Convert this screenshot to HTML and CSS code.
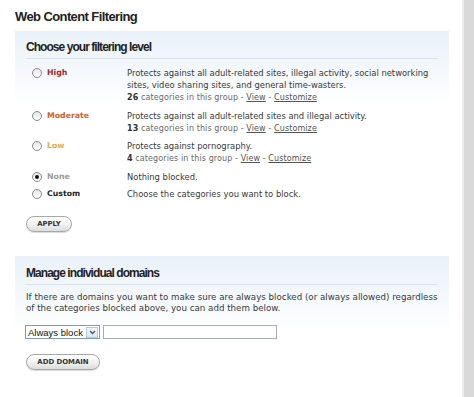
FILE: index.html
```html
<!DOCTYPE html>
<html lang="en">

<head>
  <meta charset="UTF-8">
  <title>Web Content Filtering</title>
  <link rel="stylesheet" href="styles.css">
</head>

<body>
  <div class="page">
    <div class="main">
      <h1 class="page-title">Web Content Filtering</h1>

      <div class="panel">
        <h2 class="panel-title">Choose your filtering level</h2>

        <div class="levels">
          <div class="level">
            <input type="radio" name="level" class="radio">
            <span class="level-name high">High</span>
            <div class="level-desc">
              <p>Protects against all adult-related sites, illegal activity, social networking sites, video sharing sites, and general time-wasters.</p>
              <p class="cats"><b>26</b> categories in this group - <a href="#">View</a> - <a href="#">Customize</a></p>
            </div>
          </div>
          <div class="level">
            <input type="radio" name="level" class="radio">
            <span class="level-name moderate">Moderate</span>
            <div class="level-desc">
              <p>Protects against all adult-related sites and illegal activity.</p>
              <p class="cats"><b>13</b> categories in this group - <a href="#">View</a> - <a href="#">Customize</a></p>
            </div>
          </div>
          <div class="level">
            <input type="radio" name="level" class="radio">
            <span class="level-name low">Low</span>
            <div class="level-desc">
              <p>Protects against pornography.</p>
              <p class="cats"><b>4</b> categories in this group - <a href="#">View</a> - <a href="#">Customize</a></p>
            </div>
          </div>
          <div class="level">
            <input type="radio" name="level" class="radio" checked>
            <span class="level-name none">None</span>
            <div class="level-desc">
              <p>Nothing blocked.</p>
            </div>
          </div>
          <div class="level">
            <input type="radio" name="level" class="radio">
            <span class="level-name custom">Custom</span>
            <div class="level-desc">
              <p>Choose the categories you want to block.</p>
            </div>
          </div>
        </div>

        <button class="btn apply">Apply</button>
      </div>

      <div class="panel domains">
        <h2 class="panel-title">Manage individual domains</h2>
        <p class="intro">If there are domains you want to make sure are always blocked (or always allowed) regardless of the categories blocked above, you can add them below.</p>

        <div class="domain-form">
          <div class="select">
            <span class="select-value">Always block</span>
            <span class="select-arrow">
              <svg width="7" height="5" viewBox="0 0 7 5"><path d="M1 1 L3.5 3.5 L6 1" fill="none" stroke="#3a5c8c" stroke-width="1.4"/></svg>
            </span>
          </div>
          <input type="text" class="domain-input">
        </div>

        <button class="btn add">Add Domain</button>
      </div>
    </div>
    <div class="side-bar"></div>
  </div>
</body>

</html>
```

FILE: styles.css
```css
* {
  margin: 0;
  padding: 0;
  box-sizing: border-box;
}

body {
  font-family: "DejaVu Sans", Verdana, sans-serif;
  font-size: 8.4px;
  color: #383838;
  background: white;
}

.page {
  display: flex;
  min-height: 397px;
}

.main {
  width: 462px;
  padding: 9px 13px 0 15px;
}

.side-bar {
  flex: 1;
  background: #d9d9d9;
  border-left: 2px solid #eeeeee;
}

.page-title {
  font-family: "Liberation Sans", Arial, sans-serif;
  font-size: 13px;
  letter-spacing: -0.6px;
  line-height: 16px;
  color: #222;
  margin-bottom: 6px;
}

.panel {
  background: linear-gradient(to bottom, #eaf1f9 0px, #f4f8fc 40px, #ffffff 75px);
  padding: 8px 11px 24px 10px;
}

.panel-title {
  font-family: "Liberation Sans", Arial, sans-serif;
  font-size: 12px;
  letter-spacing: -0.95px;
  line-height: 16px;
  color: #222;
  padding-left: 1px;
  padding-bottom: 3px;
  border-bottom: 1px solid #dde3ea;
}

.levels {
  display: flex;
  flex-direction: column;
  gap: 5.5px;
  margin-top: 8px;
}

.level {
  display: grid;
  grid-template-columns: 15px 80px 1fr;
  padding-left: 7px;
  line-height: 12px;
}

.radio {
  appearance: none;
  width: 10px;
  height: 10px;
  margin-top: 1px;
  border: 1px solid #8a8a8a;
  border-radius: 50%;
  background: linear-gradient(to bottom, #e6e6e6, #ffffff);
  display: flex;
  justify-content: center;
  align-items: center;
}

.radio:checked::after {
  content: '';
  width: 4px;
  height: 4px;
  border-radius: 50%;
  background: #111;
}

.level-name {
  font-weight: bold;
  font-size: 7.8px;
}

.level-name.high {
  color: #a1282b;
}

.level-name.moderate {
  color: #d0622c;
}

.level-name.low {
  color: #e6aa44;
}

.level-name.none {
  color: #9a9a9a;
}

.level-name.custom {
  color: #262626;
}

.level-desc p {
  line-height: 12px;
}

.level-desc .cats {
  margin-top: 1px;
  color: #6a6a6a;
  font-size: 8px;
  letter-spacing: 0.1px;
}

.cats b {
  color: #333;
}

.cats a {
  color: #555;
}

.btn {
  font-family: "DejaVu Sans", Verdana, sans-serif;
  font-weight: bold;
  font-size: 6.9px;
  text-transform: uppercase;
  color: #333;
  height: 16px;
  border: 1px solid #a8a8a8;
  border-radius: 8px;
  background: linear-gradient(to bottom, #ffffff, #f2f2f2 50%, #dcdcdc);
  box-shadow: 0 1px 1px rgba(0, 0, 0, 0.15);
  margin-left: 1px;
}

.btn.apply {
  width: 46px;
  margin-top: 16px;
}

.btn.add {
  width: 74px;
  margin-top: 15px;
}

.domains {
  padding-top: 9px;
  height: 141px;
}

.intro {
  font-size: 8.7px;
  line-height: 11px;
  margin-top: 7px;
  padding-left: 1px;
}

.domain-form {
  display: flex;
  gap: 3px;
  margin-top: 11px;
}

.select {
  display: flex;
  align-items: center;
  width: 75px;
  height: 14px;
  border: 1px solid #7f9db9;
  background: white;
  padding: 1px;
}

.select-value {
  flex: 1;
  font-family: "Liberation Sans", Arial, sans-serif;
  font-size: 9.5px;
  color: #111;
  padding-left: 1px;
}

.select-arrow {
  width: 12px;
  height: 11px;
  border: 1px solid #b8c8dc;
  background: linear-gradient(to bottom, #f3f6fb, #dde7f3);
  display: flex;
  justify-content: center;
  align-items: center;
}

.domain-input {
  width: 174px;
  height: 14px;
  border: 1px solid #a5acb5;
  background: white;
}
```
